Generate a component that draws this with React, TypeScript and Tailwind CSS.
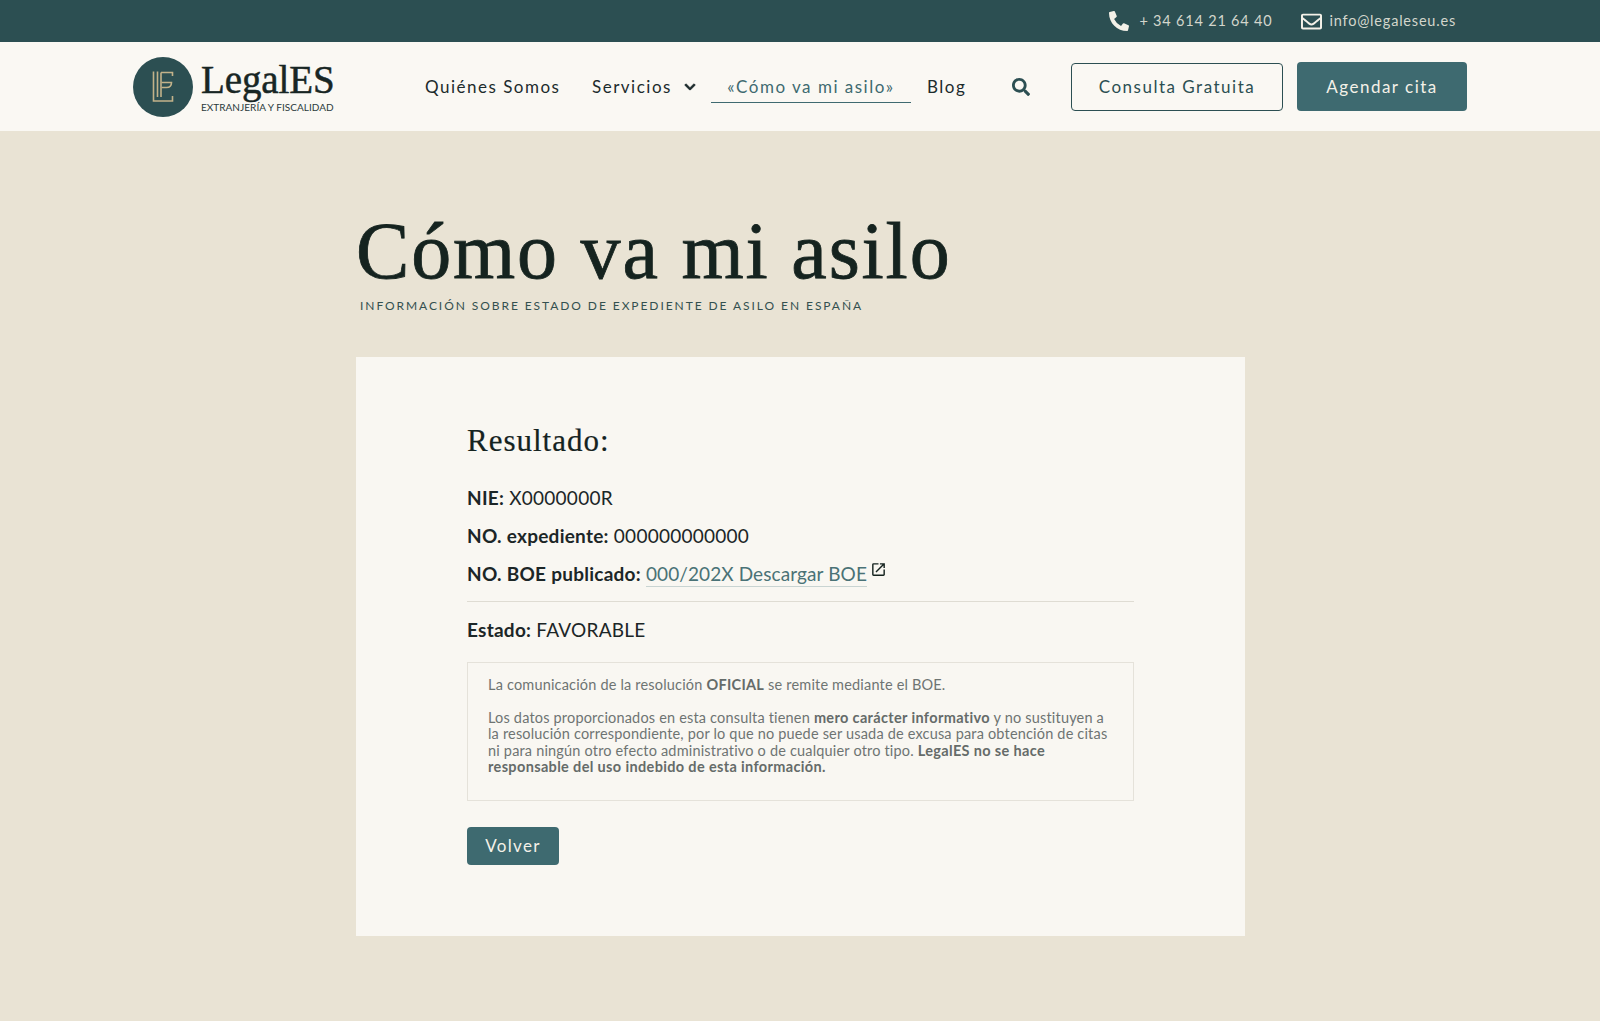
import React from 'react';
import { FaChevronDown, FaPhoneAlt, FaRegEnvelope, FaSearch } from 'react-icons/fa';
import { MdOpenInNew } from 'react-icons/md';

const serif = "font-['Liberation_Serif',serif]";

function LogoMark() {
  return (
    <svg viewBox="0 0 60 60" className="w-[60px] h-[60px] shrink-0">
      <circle cx="30" cy="30" r="30" fill="#2c4f52" />
      <path d="M20.5 14.5v29.5h19v-5M24.5 14.5v25.5" fill="none" stroke="#c2b28a" strokeWidth="1.6" />
      <path d="M28 15.5h11.5v3.5M28 15.5v24.5" fill="none" stroke="#c2b28a" strokeWidth="1.6" />
      <path d="M28.5 25.5h10c0 3-2 5-5 5h-5" fill="none" stroke="#c2b28a" strokeWidth="1.6" />
    </svg>
  );
}

function NavBar() {
  return (
    <div className="h-[89px] bg-[#faf8f3] flex items-center pl-[133px] text-[#1c2b2c]">
      <div className="flex items-center gap-2 w-[292px]">
        <LogoMark />
        <div className="flex flex-col">
          <span className={`${serif} text-[39px] leading-[40px] mt-[1px] tracking-[-0.1px] [-webkit-text-stroke:0.5px_#182624] text-[#182624]`}>LegalES</span>
          <span className="font-['Lato',sans-serif] text-[10px] leading-[14px] tracking-[0.03px] text-[#2a3a3b]">EXTRANJERÍA Y FISCALIDAD</span>
        </div>
      </div>
      <nav className="flex items-center text-[17px] tracking-[1.5px]">
        <a className="w-[167px]">Quiénes Somos</a>
        <a className="flex items-center gap-3 w-[119px]">
          Servicios <FaChevronDown className="w-[12px] h-[12px]" stroke="currentColor" strokeWidth={30} />
        </a>
        <a className="w-[200px] h-[33px] leading-[33px] text-center text-[#3e6a70] border-b border-[#3e6a70]">«Cómo va mi asilo»</a>
        <a className="ml-[16px] w-[85px]">Blog</a>
      </nav>
      <FaSearch className="w-[18px] h-[18px] text-[#2c4f52]" />
      <a className="ml-[41px] w-[212px] h-[48px] flex items-center justify-center border border-[#2c4f52] rounded-[4px] text-[17px] tracking-[1.5px] text-[#2c4f52]">Consulta Gratuita</a>
      <a className="ml-[14px] w-[170px] h-[49px] flex items-center justify-center bg-[#3e6a70] rounded-[4px] text-[17px] tracking-[1.5px] text-[#f4f1e8]">Agendar cita</a>
    </div>
  );
}

export default function App() {
  return (
    <div className="min-h-[1021px] bg-[#e9e3d4] font-['Lato',sans-serif]">
      <div className="h-[42px] bg-[#2c4f52] flex items-center justify-end gap-[29px] pr-[144px] text-[#d3d6cc] text-[14.5px] tracking-[0.8px]">
        <span className="flex items-center gap-[10px]">
          <FaPhoneAlt className="w-[20px] h-[20px] text-[#f4f1e8]" />
          + 34 614 21 64 40
        </span>
        <span className="flex items-center gap-[7px]">
          <FaRegEnvelope className="w-[21px] h-[21px] text-[#f4f1e8]" />
          info@legaleseu.es
        </span>
      </div>
      <NavBar />

      <main className="w-[889px] ml-[356px] pt-[76px]">
        <h1 className={`${serif} text-[80px] leading-[88px] text-[#15231f] tracking-[1.8px] [-webkit-text-stroke:0.8px_#15231f]`}>Cómo va mi asilo</h1>
        <p className="mt-[3px] ml-[4px] text-[12px] leading-[16px] tracking-[1.93px] text-[#33504f]">INFORMACIÓN SOBRE ESTADO DE EXPEDIENTE DE ASILO EN ESPAÑA</p>

        <section className="mt-[43px] h-[579px] bg-[#f9f7f2] px-[111px] pt-[65px] text-[19px] tracking-[0.25px] text-[#1c2627]">
          <h2 className={`${serif} text-[31px] leading-[38px] tracking-[1px] [-webkit-text-stroke:0.2px_#15231f] text-[#15231f]`}>Resultado:</h2>
          <p className="mt-[26px] leading-[24px]"><b className="font-bold">NIE:</b> X0000000R</p>
          <p className="mt-[14px] leading-[24px]"><b className="font-bold">NO. expediente:</b> 000000000000</p>
          <p className="mt-[14px] leading-[24px] flex">
            <b className="font-bold">NO. BOE publicado:</b>
            <a className="ml-[5px] tracking-[0.1px] text-[#4a7276] border-b border-[#c9d4d2]">000/202X Descargar BOE</a>
            <MdOpenInNew className="ml-[3px] -mt-[1px] w-[17px] h-[17px] text-[#15231f]" />
          </p>
          <hr className="mt-[14px] border-[#dfdcd3]" />
          <p className="mt-[16px] leading-[24px]"><b className="font-bold">Estado:</b> FAVORABLE</p>

          <div className="mt-[20px] h-[139px] border border-[#e5e2da] px-[20px] pt-[14px] text-[14.5px] tracking-[0.18px] leading-[16.5px] text-[#6e7472]">
            <p>La comunicación de la resolución <b className="font-bold tracking-[0.3px] text-[#656b69]">OFICIAL</b> se remite mediante el BOE.</p>
            <p className="mt-[16px]">
              Los datos proporcionados en esta consulta tienen <b className="font-bold tracking-[0.35px] text-[#656b69]">mero carácter informativo</b> y no sustituyen a<br />
              la resolución correspondiente, por lo que no puede ser usada de excusa para obtención de citas<br />
              ni para ningún otro efecto administrativo o de cualquier otro tipo. <b className="font-bold tracking-[0.35px] text-[#656b69]">LegalES no se hace<br />
              responsable del uso indebido de esta información.</b>
            </p>
          </div>

          <a className="mt-[26px] w-[92px] h-[38px] flex items-center justify-center bg-[#3e6a70] rounded-[4px] text-[17px] tracking-[1.3px] text-[#f4f1e8]">Volver</a>
        </section>
      </main>
    </div>
  );
}
